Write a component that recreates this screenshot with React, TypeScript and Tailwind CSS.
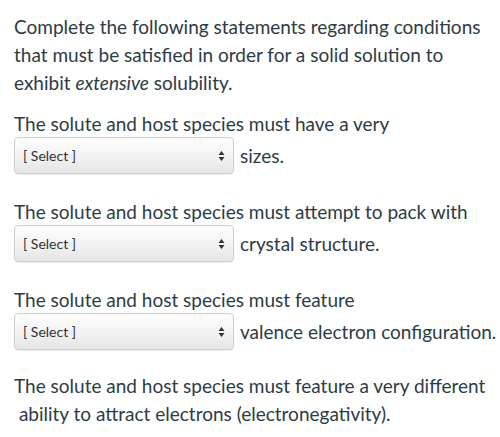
function SelectBox() {
  return (
    <div className="relative w-[220px] h-[37px] shrink-0 rounded-[4px] border border-[#cfcfcf] bg-gradient-to-b from-white to-[#e6e6e6] shadow-[0_1px_1px_rgba(0,0,0,0.08)]">
      <span className="absolute left-[8px] top-[9px] text-[14px] leading-[17px] text-[#333]">
        [ Select ]
      </span>
      <svg
        className="absolute right-[8px] top-[12px]"
        width="7"
        height="12"
        viewBox="0 0 7 12"
      >
        <path d="M3.5 1 L6.5 5 L0.5 5 Z" fill="#333" />
        <path d="M3.5 11 L6.5 7 L0.5 7 Z" fill="#333" />
      </svg>
    </div>
  );
}

export default function App() {
  const questions = [
    { lead: "The solute and host species must have a very", tail: "sizes." },
    {
      lead: "The solute and host species must attempt to pack with",
      tail: "crystal structure.",
    },
    {
      lead: "The solute and host species must feature",
      tail: "valence electron configuration.",
    },
  ];

  return (
    <div className="w-[500px] h-[437px] bg-white px-[14px] pt-[13px] font-['Lato',sans-serif] text-[19px] leading-[28px] text-[#2d3b45]">
      <p>
        Complete the following statements regarding conditions that must be
        satisfied in order for a solid solution to exhibit{" "}
        <em>extensive</em> solubility.
      </p>

      {questions.map((q, i) => (
        <div key={i} className={i === 0 ? "mt-[13px]" : "mt-[24px]"}>
          <p>{q.lead}</p>
          <div className="flex items-center gap-[6px] -mt-[1px]">
            <SelectBox />
            <span className="whitespace-nowrap">{q.tail}</span>
          </div>
        </div>
      ))}

      <p className="mt-[22px]">
        The solute and host species must feature a very different{" "}
        {"\u00a0"}ability to attract electrons (electronegativity).
      </p>
    </div>
  );
}
